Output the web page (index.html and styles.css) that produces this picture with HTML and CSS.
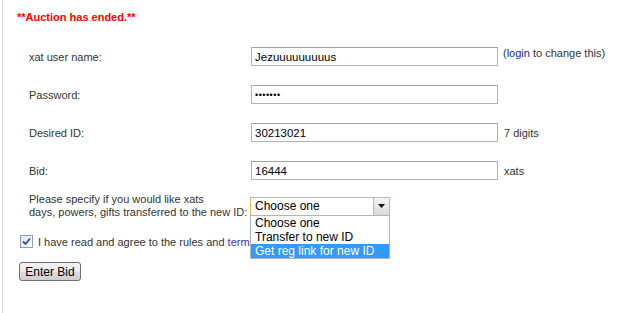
FILE: index.html
```html
<!DOCTYPE html>
<html lang="en">
<head>
    <meta charset="UTF-8">
    <title>Auction</title>
    <link rel="stylesheet" href="styles.css">
</head>
<body>
    <div class="page">
        <p class="ended">**Auction has ended.**</p>

        <div class="form">
            <div class="row">
                <label>xat user name:</label>
                <input class="field" type="text" value="Jezuuuuuuuuus">
                <span class="note note-top">(<a href="#" class="link">login</a> to change this)</span>
            </div>
            <div class="row">
                <label>Password:</label>
                <input class="field field-pass" type="text" value="•••••••">
            </div>
            <div class="row">
                <label>Desired ID:</label>
                <input class="field" type="text" value="30213021">
                <span class="note">7 digits</span>
            </div>
            <div class="row">
                <label>Bid:</label>
                <input class="field" type="text" value="16444">
                <span class="note">xats</span>
            </div>
            <div class="row row-choice">
                <label>Please specify if you would like xats<br>days, powers, gifts transferred to the new ID:</label>
                <div class="select">
                    <span class="select-value">Choose one</span>
                    <span class="select-arrow">
                        <svg width="7" height="4" viewBox="0 0 7 4"><polygon points="0,0 7,0 3.5,4" fill="#111"/></svg>
                    </span>
                    <ul class="options">
                        <li>Choose one</li>
                        <li>Transfer to new ID</li>
                        <li class="active">Get reg link for new ID</li>
                    </ul>
                </div>
            </div>
        </div>

        <div class="agree">
            <span class="check">
                <svg width="9" height="9" viewBox="0 0 9 9"><path d="M1 4.5 L3.5 7 L8 1.5" fill="none" stroke="#2b4fa8" stroke-width="1.8"/></svg>
            </span>
            <span>I have read and agree to the rules and <a href="#" class="link terms">terms</a></span>
        </div>

        <button class="bid-button">Enter Bid</button>
    </div>
</body>
</html>
```

FILE: styles.css
```css
body {
    margin: 0;
    font-family: "Liberation Sans", Arial, sans-serif;
    background: #fff;
    color: #333;
}

.page {
    margin-left: 2px;
    border-left: 1px solid #d3dae4;
    min-height: 313px;
    box-sizing: border-box;
    padding-top: 11px;
}

.ended {
    margin: 0 0 0 14px;
    color: #f00;
    font-size: 11px;
    font-weight: bold;
    line-height: 13px;
}

.form {
    padding-left: 26px;
    margin-top: 23px;
}

.row {
    display: flex;
    align-items: center;
    margin-bottom: 19px;
    font-size: 11px;
}

.row label {
    width: 222px;
    flex-shrink: 0;
}

.field {
    width: 247px;
    height: 19px;
    box-sizing: border-box;
    border: 1px solid #b3b3b3;
    border-top-color: #a2a2a2;
    padding: 0 3px;
    margin: 0;
    font-family: "Liberation Sans", Arial, sans-serif;
    font-size: 11.5px;
    color: #000;
}

.field-pass {
    font-size: 9px;
    letter-spacing: 0.5px;
}

.note {
    margin-left: 6px;
    font-size: 11px;
}

.note-top {
    align-self: flex-start;
    line-height: 13px;
    margin-left: 5px;
}

.link {
    color: #1d1da3;
    text-decoration: none;
}

.terms {
    color: #4a2fa6;
}

.row-choice {
    margin-top: -6px;
    line-height: 13px;
}

.select {
    position: relative;
    width: 140px;
    height: 19px;
    box-sizing: border-box;
    border: 1px solid #e2b94f;
    display: flex;
    align-items: center;
    font-size: 12px;
    color: #000;
    margin-left: -1px;
}

.select-value {
    flex: 1;
    padding-left: 4px;
}

.select-arrow {
    width: 16px;
    height: 17px;
    box-sizing: border-box;
    border-left: 1px solid #b8b8b8;
    background: linear-gradient(180deg, #f4f4f4 0%, #d8d8d8 100%);
    display: flex;
    justify-content: center;
    align-items: center;
}

.options {
    position: absolute;
    top: 17px;
    left: -1px;
    width: 140px;
    box-sizing: border-box;
    margin: 0;
    padding: 0;
    list-style: none;
    background: #fff;
    border: 1px solid #a9b6c6;
    font-size: 12px;
    line-height: 14px;
    color: #000;
}

.options li {
    padding-left: 4px;
    height: 14px;
}

.options .active {
    background: #3399ff;
    color: #fff;
}

.agree {
    display: flex;
    align-items: center;
    margin: -3px 0 0 17px;
    font-size: 11px;
}

.check {
    width: 13px;
    height: 13px;
    box-sizing: border-box;
    border: 1px solid #8f9fbb;
    background: linear-gradient(135deg, #dfe4ec 0%, #ffffff 100%);
    display: flex;
    justify-content: center;
    align-items: center;
    margin-right: 5px;
}

.bid-button {
    display: block;
    margin: 14px 0 0 16px;
    width: 62px;
    height: 19px;
    padding: 0;
    border: 1px solid #707070;
    border-radius: 3px;
    background: linear-gradient(180deg, #f2f2f2 0%, #ebebeb 50%, #dddddd 51%, #cfcfcf 100%);
    font-family: "Liberation Sans", Arial, sans-serif;
    font-size: 12px;
    color: #000;
}
```
